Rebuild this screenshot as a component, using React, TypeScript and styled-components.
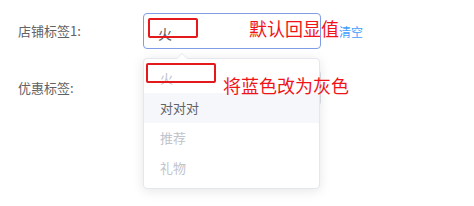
import { createGlobalStyle } from 'styled-components';
import styled from 'styled-components';

const GlobalStyle = createGlobalStyle`
  html, body {
    margin: 0;
    padding: 0;
    background: #fff;
  }
  body {
    font-family: "Noto Sans CJK SC", "Noto Sans", sans-serif;
    -webkit-font-smoothing: antialiased;
  }
`;

const options = [
  { label: '火', disabled: true },
  { label: '对对对', hover: true },
  { label: '推荐', disabled: true },
  { label: '礼物', disabled: true },
];

export default function App() {
  return (
    <Page>
      <GlobalStyle />
      <Form>
        <FormItem>
          <Label>店铺标签1:</Label>
          <SelectWrap>
            <Input $focused>火</Input>
            <Dropdown>
              <Arrow />
              {options.map((o) => (
                <Option key={o.label} $disabled={o.disabled} $hover={o.hover}>
                  {o.label}
                </Option>
              ))}
            </Dropdown>
          </SelectWrap>
          <ClearLink>清空</ClearLink>
        </FormItem>
        <FormItem>
          <Label>优惠标签:</Label>
          <SelectWrap>
            <Input />
          </SelectWrap>
        </FormItem>
      </Form>

      <MarkBox $left={148} $top={18} $width={50} $height={20} />
      <MarkText $left={249} $top={15}>默认回显值</MarkText>
      <MarkBox $left={146} $top={63} $width={70} $height={20} />
      <MarkText $left={223} $top={72}>将蓝色改为灰色</MarkText>
    </Page>
  );
}

const Page = styled.div`
  position: relative;
  width: 474px;
  height: 206px;
  overflow: hidden;
  background: #fff;
`;

const Form = styled.div`
  display: flex;
  flex-direction: column;
  gap: 21px;
  padding: 13px 0 0 18px;
`;

const FormItem = styled.div`
  display: flex;
  align-items: center;
  height: 36px;
`;

const Label = styled.div`
  width: 125px;
  font-size: 13px;
  color: #606266;
  line-height: 36px;
`;

const SelectWrap = styled.div`
  position: relative;
  width: 178px;
`;

const Input = styled.div<{ $focused?: boolean }>`
  box-sizing: border-box;
  height: 36px;
  padding: 0 14px;
  border: 1px solid ${({ $focused }) => ($focused ? '#7f9de6' : '#dcdfe6')};
  border-radius: 4px;
  font-size: 14px;
  line-height: 38px;
  color: #606266;
  background: #fff;
`;

const ClearLink = styled.span`
  margin-left: 18px;
  font-size: 12px;
  color: #409eff;
  line-height: 36px;
  padding-top: 2px;
`;

const Dropdown = styled.div`
  position: absolute;
  top: 45px;
  left: 0;
  z-index: 2;
  box-sizing: border-box;
  width: 177px;
  padding: 4px 0 5px;
  background: #fff;
  border: 1px solid #e4e7ed;
  border-radius: 4px;
  box-shadow: 0 2px 12px rgba(0, 0, 0, 0.1);
`;

const Arrow = styled.div`
  position: absolute;
  top: -6px;
  left: 32px;
  width: 0;
  height: 0;
  border: 6px solid transparent;
  border-top-width: 0;
  border-bottom-color: #e4e7ed;

  &::after {
    content: '';
    position: absolute;
    top: 1px;
    left: -6px;
    border: 6px solid transparent;
    border-top-width: 0;
    border-bottom-color: #fff;
  }
`;

const Option = styled.div<{ $disabled?: boolean; $hover?: boolean }>`
  height: 30px;
  padding: 0 16px;
  font-size: 13px;
  line-height: 30px;
  color: ${({ $disabled }) => ($disabled ? '#c0c4cc' : '#606266')};
  background: ${({ $hover }) => ($hover ? '#f5f7fa' : 'transparent')};
`;

const MarkBox = styled.div<{ $left: number; $top: number; $width: number; $height: number }>`
  position: absolute;
  z-index: 5;
  left: ${({ $left }) => $left}px;
  top: ${({ $top }) => $top}px;
  width: ${({ $width }) => $width}px;
  height: ${({ $height }) => $height}px;
  box-sizing: border-box;
  border: 2px solid #e3191b;
  border-radius: 2px;
`;

const MarkText = styled.div<{ $left: number; $top: number }>`
  position: absolute;
  z-index: 5;
  left: ${({ $left }) => $left}px;
  top: ${({ $top }) => $top}px;
  font-size: 18px;
  line-height: 26px;
  color: #f0141a;
  white-space: nowrap;
`;
